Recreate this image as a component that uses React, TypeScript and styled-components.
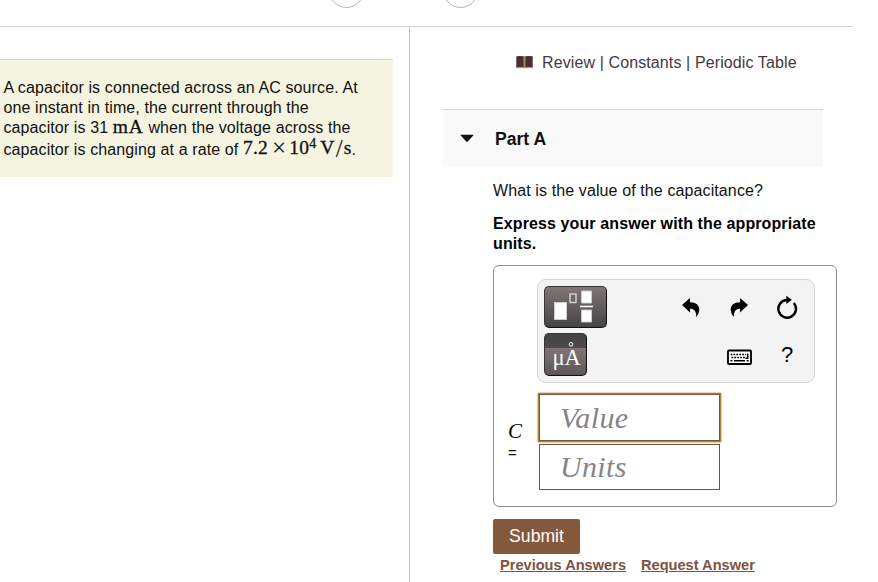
import React from "react";
import styled, { createGlobalStyle } from "styled-components";

const GlobalStyle = createGlobalStyle`
  * { box-sizing: border-box; }
  body {
    margin: 0;
    background: #fff;
    color: #111;
    font-family: "Liberation Sans", Arial, sans-serif;
    font-size: 16px;
    overflow: hidden;
  }
`;

const Page = styled.div`
  width: 878px;
  height: 582px;
  overflow: hidden;
`;

const TopBar = styled.header`
  display: flex;
  align-items: flex-end;
  gap: 79px;
  width: 852px;
  height: 27px;
  padding: 0 0 18px 329px;
  border-bottom: 1px solid #d4d4d4;
`;

const NavCircle = styled.span`
  flex: none;
  width: 35px;
  height: 35px;
  border: 1px solid #b5b5b5;
  border-radius: 50%;
`;

const Columns = styled.main`
  display: grid;
  grid-template-columns: 410px 1fr;
  height: 555px;
`;

const ProblemColumn = styled.section`
  border-right: 1px solid #c9c0ae;
  padding-top: 32px;
`;

const ProblemCard = styled.div`
  width: 393px;
  height: 118px;
  padding: 18px 0 0 3.4px;
  border-top: 1px solid #d5d8cf;
  background: #f5f4e0;
`;

const Line = styled.div<{ $height?: number; $spacing?: number; $bold?: boolean }>`
  height: ${(p) => p.$height ?? 20}px;
  line-height: ${(p) => p.$height ?? 20}px;
  letter-spacing: ${(p) => p.$spacing ?? 0.11}px;
  font-weight: ${(p) => (p.$bold ? 700 : 400)};
  white-space: nowrap;
`;

const MathText = styled.span<{ $spacing?: number; $raise?: number }>`
  font-family: "Liberation Serif", "Times New Roman", serif;
  font-size: 19.5px;
  line-height: 0;
  letter-spacing: ${(p) => p.$spacing ?? 0}px;
  vertical-align: ${(p) => p.$raise ?? 0}px;
  -webkit-text-stroke: 0.3px #111;
`;

const Times = styled.span`
  margin: 0 3px 0 4px;
  font-size: 25px;
  line-height: 0;
  vertical-align: -2px;
  -webkit-text-stroke: 0;
`;

const Exponent = styled.span`
  margin-right: 4px;
  font-size: 14px;
  line-height: 0;
  vertical-align: 6px;
`;

const Slash = styled.span`
  margin: 0 1px;
  font-size: 25px;
  line-height: 0;
  vertical-align: -3px;
  -webkit-text-stroke: 0;
`;

const AnswerColumn = styled.section`
  padding-left: 33px;
`;

const ReferenceLinks = styled.nav`
  display: flex;
  align-items: center;
  gap: 9px;
  height: 82px;
  padding: 0 0 11px 73px;
  color: #46383c;
  & > svg { margin-bottom: 1px; }
`;

const PartHeader = styled.div`
  display: flex;
  align-items: center;
  width: 380px;
  height: 58px;
  padding-left: 17px;
  gap: 21px;
  border-top: 1px solid #d6d6d6;
  background: #f9f9f9;
  font-size: 17.6px;
  font-weight: 700;
  & > span { padding-top: 2px; }
`;

const PartBody = styled.div`
  padding: 14px 0 0 50px;
`;

const Instruction = styled.div`
  margin-top: 13px;
  color: #000;
`;

const AnswerBox = styled.div`
  width: 344px;
  height: 242px;
  margin-top: 11px;
  padding: 13px 0 0 14px;
  border: 1px solid #8f8f8f;
  border-radius: 6px;
`;

const Toolbar = styled.div`
  display: flex;
  justify-content: space-between;
  width: 278px;
  height: 104px;
  margin-left: 29px;
  padding: 6px 3px 0 6px;
  border: 1px solid #d2d2d2;
  border-radius: 9px;
  background: #f3f3f3;
`;

const PaletteButtons = styled.div`
  display: flex;
  flex-direction: column;
  gap: 5px;
`;

const PaletteButton = styled.button<{ $split?: boolean }>`
  display: block;
  width: ${(p) => (p.$split ? 43 : 63)}px;
  height: ${(p) => (p.$split ? 43 : 42)}px;
  padding: 0;
  border: 1px solid #383637;
  border-right-color: #111;
  border-bottom-color: #111;
  border-radius: 5px;
  background: ${(p) =>
    p.$split
      ? "linear-gradient(#444243 0, #4d4b4c 14px, #817577 14px, #5b5657 100%)"
      : "linear-gradient(#817577, #454344)"};
  color: #fff;
`;

const ActionGrid = styled.div`
  display: grid;
  grid-template-columns: repeat(3, 48px);
  grid-template-rows: 44px 50px;
  place-items: center;
`;

const ActionButton = styled.button<{ $drop?: number }>`
  display: grid;
  place-items: center;
  width: 36px;
  height: 36px;
  margin-top: ${(p) => (p.$drop ?? 0) * 2}px;
  padding: 0;
  border: 0;
  background: none;
  color: #000;
  font: 22px "Liberation Sans", Arial, sans-serif;
`;

const Fields = styled.div`
  display: flex;
  margin-top: 11px;
`;

const Variable = styled.div`
  width: 31px;
  padding-top: 26px;
`;

const VariableName = styled.div`
  height: 22px;
  font: italic 21px/22px "Liberation Serif", "Times New Roman", serif;
  color: #000;
`;

const Equals = styled.div`
  font-size: 15px;
  line-height: 22px;
`;

const Inputs = styled.div`
  display: flex;
  flex-direction: column;
  gap: 3px;
`;

const Field = styled.input<{ $active?: boolean }>`
  display: block;
  width: 181px;
  height: ${(p) => (p.$active ? 47 : 46)}px;
  padding: 0 0 0 20px;
  border: 1px solid #795438;
  border-radius: 0;
  outline: none;
  background: #fff;
  box-shadow: ${(p) => (p.$active ? "0 0 1px 1px #a98338, 0 0 2px 1px #c9a55a" : "none")};
  font: italic 30px "Liberation Serif", "Times New Roman", serif;
  letter-spacing: 0.35px;
  &::placeholder { color: #858585; opacity: 1; }
`;

const Submit = styled.button`
  display: block;
  width: 87px;
  height: 35px;
  margin-top: 12px;
  padding: 0;
  border: 0;
  border-radius: 2px;
  background: #83583b;
  color: #fff;
  font: 17.6px "Liberation Sans", Arial, sans-serif;
`;

const FooterLinks = styled.div`
  display: flex;
  gap: 15px;
  padding: 2px 0 0 7px;
`;

const FooterLink = styled.a`
  color: #7d5340;
  font-size: 14.6px;
  font-weight: 700;
  line-height: 18px;
  text-decoration: underline;
  white-space: nowrap;
`;

const BookIcon = () => (
  <svg width="17" height="14" viewBox="0 0 17 14">
    <path d="M.3 1.3Q4 .5 7.8 1.3V12.3Q4 11.8 .3 12.3ZM9.2 1.3Q13 .5 16.7 1.3V12.3Q13 11.8 9.2 12.3Z" fill="#4d2d35" />
    <path d="M8.5 1V12.7M0 12.7H17" fill="none" stroke="#8a7440" strokeWidth=".8" />
  </svg>
);

const CaretIcon = () => (
  <svg width="14" height="9" viewBox="0 0 14 9">
    <path d="M1 .7H13Q14 .7 13.2 1.6L7.8 7.6Q7 8.4 6.2 7.6L.8 1.6Q0 .7 1 .7Z" fill="#111" />
  </svg>
);

const TemplateIcon = () => (
  <svg width="61" height="40" viewBox="0 0 61 40">
    <rect x="9.5" y="15.5" width="12" height="17" fill="#fff" stroke="#cfcccc" />
    <rect x="25" y="7" width="6" height="8.5" fill="none" stroke="#d7d3d4" strokeWidth="1.4" />
    <path d="M36.5 4h10v12h-10zM36.5 23h10v12h-10z" fill="#fff" stroke="#cfcccc" />
    <path d="M35 19.5h13" stroke="#fff" strokeWidth="1.6" />
  </svg>
);

const UnitsIcon = () => (
  <svg width="41" height="41" viewBox="0 0 41 41">
    <text x="7.5" y="31" fill="#fff" fontFamily="Liberation Serif, serif" fontSize="22.5">μA</text>
    <circle cx="26" cy="10.3" r="1.8" fill="none" stroke="#fff" strokeWidth="1" />
  </svg>
);

const UndoIcon = () => (
  <svg width="18" height="19" viewBox="0 0 18 19">
    <path d="M0 7 8 0V4.2C14 4.2 17.5 7 17.3 12Q17.2 16 14 19Q15 11.5 8 10.6V14.6Z" fill="#000" />
  </svg>
);

const RedoIcon = () => (
  <svg width="18" height="19" viewBox="0 0 18 19">
    <path d="M18 7 10 0V4.2C4 4.2 .5 7 .7 12Q.8 16 4 19Q3 11.5 10 10.6V14.6Z" fill="#000" />
  </svg>
);

const ResetIcon = () => (
  <svg width="22" height="24" viewBox="0 0 22 24">
    <path d="M11 5A8.8 8.8 0 1 0 17.8 8" fill="none" stroke="#000" strokeWidth="2.5" />
    <path d="M10.3 .8 15.8 4.8 10.3 9Z" fill="#000" />
  </svg>
);

const KeyboardIcon = () => (
  <svg width="25" height="16" viewBox="0 0 25 16">
    <rect x="1" y="1.5" width="23" height="13.5" rx="1" fill="#fff" stroke="#000" strokeWidth="1.9" />
    <path d="M3.5 5.5H19M4.5 8.5H19" stroke="#000" strokeWidth="1.6" strokeDasharray="1.8 1.1" />
    <path d="M20.7 4.5V9.3H18.5M3.5 11.8h2M7 11.8h11M19.7 11.8h2" fill="none" stroke="#000" strokeWidth="1.5" />
  </svg>
);

export default function App() {
  return (
    <Page>
      <GlobalStyle />
      <TopBar>
        <NavCircle />
        <NavCircle />
      </TopBar>
      <Columns>
        <ProblemColumn>
          <ProblemCard>
            <Line $spacing={0.12}>A capacitor is connected across an AC source. At</Line>
            <Line>one instant in time, the current through the</Line>
            <Line>
              capacitor is 31 <MathText $spacing={0.9}>mA</MathText> when the voltage across the
            </Line>
            <Line $height={23}>
              capacitor is changing at a rate of{" "}
              <MathText $spacing={0.2} $raise={1}>
                7.2<Times>×</Times>10<Exponent>4</Exponent>V<Slash>/</Slash>s
              </MathText>
              .
            </Line>
          </ProblemCard>
        </ProblemColumn>
        <AnswerColumn>
          <ReferenceLinks>
            <BookIcon />
            <Line>Review | Constants | Periodic Table</Line>
          </ReferenceLinks>
          <PartHeader>
            <CaretIcon />
            <span>Part A</span>
          </PartHeader>
          <PartBody>
            <Line>What is the value of the capacitance?</Line>
            <Instruction>
              <Line $bold>Express your answer with the appropriate</Line>
              <Line $bold>units.</Line>
            </Instruction>
            <AnswerBox>
              <Toolbar>
                <PaletteButtons>
                  <PaletteButton aria-label="Templates">
                    <TemplateIcon />
                  </PaletteButton>
                  <PaletteButton $split aria-label="Units"><UnitsIcon /></PaletteButton>
                </PaletteButtons>
                <ActionGrid>
                  <ActionButton $drop={-1} aria-label="Undo"><UndoIcon /></ActionButton>
                  <ActionButton $drop={-1} aria-label="Redo"><RedoIcon /></ActionButton>
                  <ActionButton $drop={-1} aria-label="Reset"><ResetIcon /></ActionButton>
                  <span />
                  <ActionButton $drop={2} aria-label="Keyboard"><KeyboardIcon /></ActionButton>
                  <ActionButton>?</ActionButton>
                </ActionGrid>
              </Toolbar>
              <Fields>
                <Variable>
                  <VariableName>C</VariableName>
                  <Equals>=</Equals>
                </Variable>
                <Inputs>
                  <Field $active placeholder="Value" />
                  <Field placeholder="Units" />
                </Inputs>
              </Fields>
            </AnswerBox>
            <Submit>Submit</Submit>
            <FooterLinks>
              <FooterLink>Previous Answers</FooterLink>
              <FooterLink>Request Answer</FooterLink>
            </FooterLinks>
          </PartBody>
        </AnswerColumn>
      </Columns>
    </Page>
  );
}
